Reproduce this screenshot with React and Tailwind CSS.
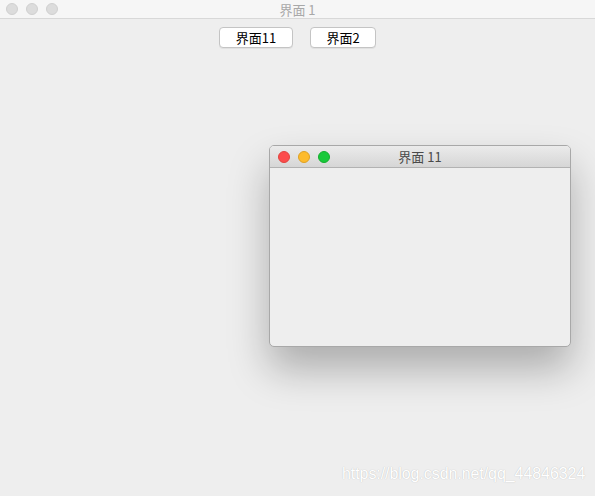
import React from "react";

const font = { fontFamily: '"Noto Sans CJK SC", "Noto Sans", sans-serif' };

export default function App() {
  return (
    <div className="relative w-[595px] h-[496px] overflow-hidden bg-[#eeeeee]" style={font}>
      {/* outer title bar */}
      <div className="relative h-[19px] bg-[#f6f6f6] border-b border-[#d8d8d8] flex items-center">
        <div className="flex gap-[8px] pl-[6px]">
          <div className="w-[12px] h-[12px] rounded-full bg-[#dcdcdc] border border-[#d0d0d0]" />
          <div className="w-[12px] h-[12px] rounded-full bg-[#dcdcdc] border border-[#d0d0d0]" />
          <div className="w-[12px] h-[12px] rounded-full bg-[#dcdcdc] border border-[#d0d0d0]" />
        </div>
        <div className="absolute inset-0 flex items-center justify-center text-[13px] text-[#a8a8a8] leading-none">
          界面 1
        </div>
      </div>

      {/* buttons */}
      <div className="flex justify-center gap-[17px] pt-[8px]">
        <button className="w-[74px] h-[21px] bg-white border border-[#c4c4c4] rounded-[4px] text-[13px] text-black leading-none flex items-center justify-center shadow-[0_1px_0_rgba(0,0,0,0.05)]">
          界面11
        </button>
        <button className="w-[66px] h-[21px] bg-white border border-[#c4c4c4] rounded-[4px] text-[13px] text-black leading-none flex items-center justify-center shadow-[0_1px_0_rgba(0,0,0,0.05)]">
          界面2
        </button>
      </div>

      {/* inner window */}
      <div className="absolute left-[269px] top-[145px] w-[302px] h-[202px] rounded-[5px] bg-[#eeeeee] border border-[#a8a8a8] overflow-hidden shadow-[0_22px_40px_rgba(0,0,0,0.28)]">
        <div className="relative h-[22px] bg-gradient-to-b from-[#ebebeb] to-[#d6d6d6] border-b border-[#b2b2b2] flex items-center">
          <div className="flex gap-[8px] pl-[8px]">
            <div className="w-[12px] h-[12px] rounded-full bg-[#fc4c4c] border border-[#e0443e]" />
            <div className="w-[12px] h-[12px] rounded-full bg-[#fdbb2d] border border-[#dea123]" />
            <div className="w-[12px] h-[12px] rounded-full bg-[#18c93a] border border-[#14ae2e]" />
          </div>
          <div className="absolute inset-0 flex items-center justify-center text-[13px] text-[#4a4a4a] leading-none">
            界面 11
          </div>
        </div>
      </div>

      {/* watermark */}
      <div
        className="absolute left-[342px] top-[466px] text-[16px] text-white leading-none tracking-[-0.07px]"
        style={{ fontFamily: '"Liberation Sans", Arial, sans-serif', textShadow: "0 0 1px rgba(0,0,0,0.25)" }}
      >
        https://blog.csdn.net/qq_44846324
      </div>
    </div>
  );
}
